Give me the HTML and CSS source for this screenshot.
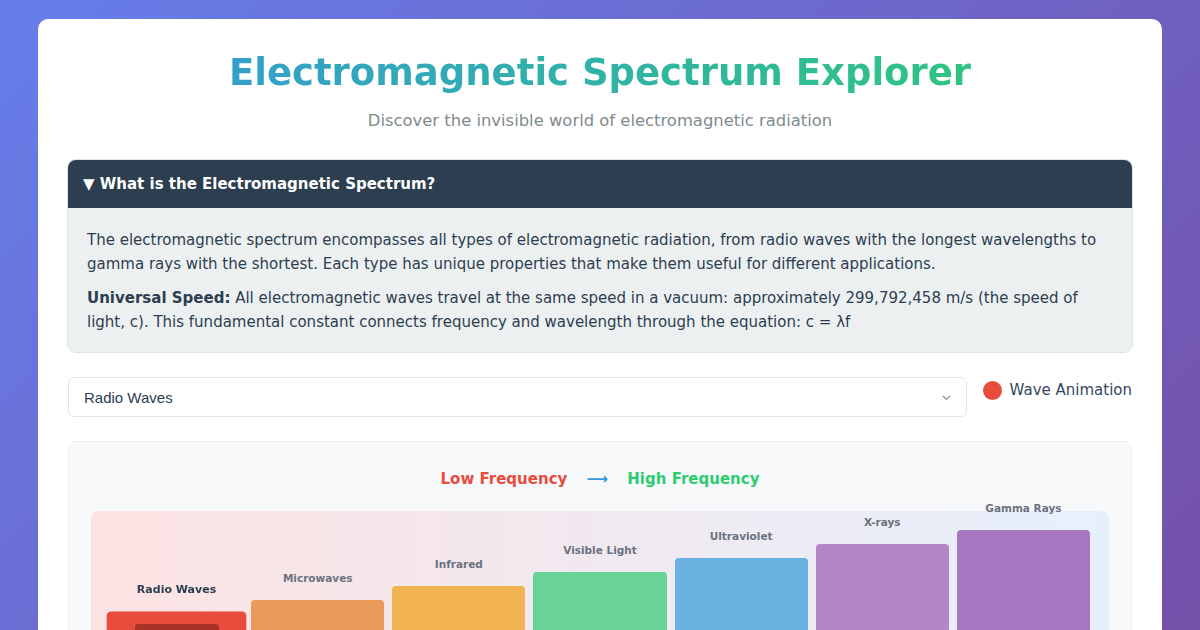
FILE: index.html
```html
<!DOCTYPE html>
<html lang="en">
<head>
    <meta charset="UTF-8">
    <meta name="viewport" content="width=device-width, initial-scale=1.0">
    <title>Electromagnetic Spectrum Explorer</title>
    <link rel="stylesheet" href="styles.css">
</head>
<body>
    <div class="container">
        <h1>Electromagnetic Spectrum Explorer</h1>
        <p class="subtitle">Discover the invisible world of electromagnetic radiation</p>

        <!-- intro -->
        <details class="info" open>
            <summary>▼ What is the Electromagnetic Spectrum?</summary>
            <div class="info-body">
                <p>The electromagnetic spectrum encompasses all types of electromagnetic radiation, from radio waves with the longest wavelengths to gamma rays with the shortest. Each type has unique properties that make them useful for different applications.</p>
                <p><strong>Universal Speed:</strong> All electromagnetic waves travel at the same speed in a vacuum: approximately 299,792,458 m/s (the speed of light, c). This fundamental constant connects frequency and wavelength through the equation: c = λf</p>
            </div>
        </details>

        <!-- controls -->
        <div class="controls">
            <div class="select-wrap">
                <select id="wave-select">
                    <option>Radio Waves</option>
                    <option>Microwaves</option>
                    <option>Infrared</option>
                    <option>Visible Light</option>
                    <option>Ultraviolet</option>
                    <option>X-rays</option>
                    <option>Gamma Rays</option>
                </select>
                <svg class="chevron" width="9" height="6" viewBox="0 0 9 6"><polyline points="1,1 4.5,4.5 8,1" fill="none" stroke="#8a929a" stroke-width="1.2"/></svg>
            </div>
            <label class="toggle">
                <span class="dot"></span>
                Wave Animation
            </label>
        </div>

        <!-- spectrum -->
        <div class="spectrum">
            <div class="freq-label">
                <span class="low">Low Frequency</span>
                <span class="arrow">⟶</span>
                <span class="high">High Frequency</span>
            </div>
            <div class="bars">
                <div class="band active">
                    <span class="band-name">Radio Waves</span>
                    <div class="bar radio" style="height: 100px"><div class="wave"></div></div>
                </div>
                <div class="band">
                    <span class="band-name">Microwaves</span>
                    <div class="bar micro" style="height: 114px"></div>
                </div>
                <div class="band">
                    <span class="band-name">Infrared</span>
                    <div class="bar infra" style="height: 128px"></div>
                </div>
                <div class="band">
                    <span class="band-name">Visible Light</span>
                    <div class="bar visible" style="height: 142px"></div>
                </div>
                <div class="band">
                    <span class="band-name">Ultraviolet</span>
                    <div class="bar uv" style="height: 156px"></div>
                </div>
                <div class="band">
                    <span class="band-name">X-rays</span>
                    <div class="bar xray" style="height: 170px"></div>
                </div>
                <div class="band">
                    <span class="band-name">Gamma Rays</span>
                    <div class="bar gamma" style="height: 184px"></div>
                </div>
            </div>
        </div>
    </div>
</body>
</html>
```

FILE: styles.css
```css
body {
    font-family: "DejaVu Sans", Verdana, sans-serif;
    margin: 0;
    padding: 19px 38px;
    min-height: 100vh;
    box-sizing: border-box;
    background: linear-gradient(135deg, #667eea 0%, #764ba2 100%);
    color: #2c3e50;
}
.container {
    background: #fff;
    border-radius: 10px;
    padding: 30px 30px 40px;
}
h1 {
    margin: 0;
    text-align: center;
    font-size: 37px;
    line-height: 48px;
    background: linear-gradient(90deg, #3498db, #2ecc71);
    -webkit-background-clip: text;
    background-clip: text;
    color: transparent;
}
.subtitle {
    text-align: center;
    color: #7f8c8d;
    font-size: 16.4px;
    line-height: 19px;
    margin: 14px 0 30px;
}
.info {
    background: #ecf0f1;
    border-radius: 8px;
    box-shadow: 0 0 0 1px #e1e5e7;
    overflow: hidden;
}
.info summary {
    list-style: none;
    background: #2c3e50;
    color: #fff;
    font-weight: bold;
    font-size: 15px;
    line-height: 18px;
    padding: 15px 15px;
    cursor: pointer;
}
.info summary::-webkit-details-marker {
    display: none;
}
.info-body {
    padding: 20px 19px 18px;
}
.info-body p {
    margin: 0 0 10px;
    font-size: 15px;
    line-height: 24px;
}
.info-body p:last-child {
    margin-bottom: 0;
}
.controls {
    display: flex;
    gap: 16px;
    align-items: flex-start;
    margin: 25px 0 24px;
}
.select-wrap {
    flex: 1;
    position: relative;
}
#wave-select {
    width: 100%;
    height: 40px;
    padding: 0 15px;
    appearance: none;
    -webkit-appearance: none;
    font-family: "Liberation Sans", Arial, sans-serif;
    font-size: 15px;
    color: #2c3e50;
    background: #fff;
    border: 1px solid #e3e6e8;
    border-radius: 6px;
}
.chevron {
    position: absolute;
    right: 16px;
    top: 18px;
}
.toggle {
    display: flex;
    align-items: center;
    gap: 8px;
    font-size: 15px;
    color: #34495e;
    line-height: 26px;
}
.dot {
    width: 19px;
    height: 19px;
    border-radius: 50%;
    background: #e74c3c;
}
.spectrum {
    background: #f8f9fa;
    border: 1px solid #eceef0;
    border-radius: 8px;
    padding: 28px 22px 20px;
}
.freq-label {
    text-align: center;
    font-weight: bold;
    font-size: 15px;
    line-height: 18px;
    margin-bottom: 23px;
}
.freq-label .low {
    color: #e74c3c;
}
.freq-label .arrow {
    color: #3498db;
    margin: 0 14px;
}
.freq-label .high {
    color: #2ecc71;
}
.bars {
    display: flex;
    align-items: flex-end;
    gap: 8px;
    padding: 19px 19px 20px;
    border-radius: 8px;
    background: linear-gradient(90deg, #fde3e3, #f1e9f0 50%, #e6f0fc);
}
.band {
    flex: 1;
    position: relative;
}
.band-name {
    position: absolute;
    top: -28px;
    left: 0;
    right: 0;
    text-align: center;
    font-size: 10.5px;
    font-weight: bold;
    color: #6b7280;
}
.bar {
    border-radius: 4px;
    overflow: hidden;
}
.band.active {
    transform: scale(1.05);
}
.band.active .band-name {
    color: #2c3e50;
}
.radio {
    padding-top: 12px;
    box-sizing: border-box;
}
.wave {
    width: 60%;
    height: 20px;
    margin: 0 auto;
    background: #a93226;
    border-radius: 3px;
}
.radio { background: #e74c3c; }
.micro { background: #ea9b5c; }
.infra { background: #f2b353; }
.visible { background: #68d394; }
.uv { background: #6ab1e1; }
.xray { background: #b386c7; }
.gamma { background: #a777c2; }
```
